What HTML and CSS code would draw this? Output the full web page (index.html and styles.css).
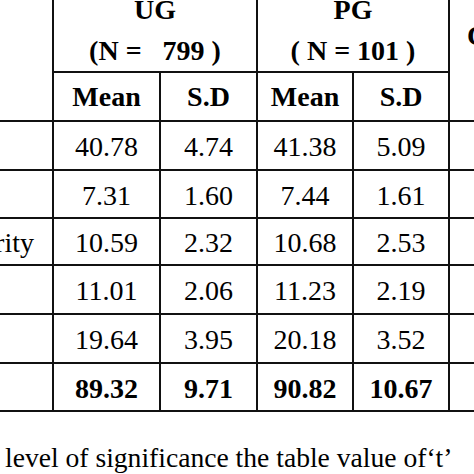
FILE: index.html
```html
<!DOCTYPE html>
<html lang="en">
<head>
  <meta charset="UTF-8">
  <title>UG / PG comparison</title>
  <meta name="viewport" content="width=device-width, initial-scale=1.0">
  <link rel="stylesheet" href="styles.css">
</head>
<body>
  <div class="sheet">
    <table class="stats">
      <colgroup>
        <col class="col-label">
        <col class="col-ug-mean">
        <col class="col-ug-sd">
        <col class="col-pg">
        <col class="col-pg">
        <col class="col-extra">
      </colgroup>
      <thead>
        <tr class="row-group">
          <th rowspan="2" class="label"></th>
          <th colspan="2" class="group">UG<br>(N = &nbsp;&nbsp;799 )</th>
          <th colspan="2" class="group">PG<br>( N = 101 )</th>
          <th rowspan="2" class="extra">Calculated ‘t’ value</th>
        </tr>
        <tr class="row-sub">
          <th>Mean</th>
          <th>S.D</th>
          <th>Mean</th>
          <th>S.D</th>
        </tr>
      </thead>
      <tbody>
        <tr>
          <td class="label"></td>
          <td>40.78</td><td>4.74</td><td>41.38</td><td>5.09</td><td></td>
        </tr>
        <tr>
          <td class="label"></td>
          <td>7.31</td><td>1.60</td><td>7.44</td><td>1.61</td><td></td>
        </tr>
        <tr>
          <td class="label">Maturity</td>
          <td>10.59</td><td>2.32</td><td>10.68</td><td>2.53</td><td></td>
        </tr>
        <tr>
          <td class="label"></td>
          <td>11.01</td><td>2.06</td><td>11.23</td><td>2.19</td><td></td>
        </tr>
        <tr>
          <td class="label"></td>
          <td>19.64</td><td>3.95</td><td>20.18</td><td>3.52</td><td></td>
        </tr>
        <tr class="total">
          <td class="label"></td>
          <td>89.32</td><td>9.71</td><td>90.82</td><td>10.67</td><td></td>
        </tr>
      </tbody>
    </table>

    <p class="note">level of significance the table value of‘t’</p>
  </div>
</body>
</html>
```

FILE: styles.css
```css
:root {
  --ink: #000;
  --line: #111;
  --paper: #fff;
}

html, body {
  margin: 0;
  background: var(--paper);
  overflow: hidden;
}

body {
  font-family: "Liberation Serif", "Times New Roman", serif;
  font-size: 28px;
  color: var(--ink);
}

.sheet {
  width: 474px;
  height: 474px;
  overflow: hidden;
}

/* table is wider than the crop: first column mostly hidden on the left */
.stats {
  border-collapse: collapse;
  table-layout: fixed;
  width: 796px;
  margin: -12px 0 0 -148px;
}

.col-label { width: 200px; }
.col-ug-mean { width: 107px; }
.col-ug-sd { width: 97px; }
.col-pg { width: 96px; }
.col-extra { width: 200px; }

.stats th,
.stats td {
  border: 2px solid var(--line);
  padding: 0;
  text-align: center;
  vertical-align: middle;
  line-height: 32px;
}

.stats td {
  padding-top: 3px;
}

.stats th {
  font-weight: bold;
}

.stats .group {
  line-height: 41px;
  border-top: none;
  vertical-align: top;
  padding-top: 1px;
}

.row-group { height: 84px; }
.row-sub { height: 49px; }

.stats th.label {
  border-top: none;
}

.stats td.label {
  text-align: right;
  padding-right: 18px;
  white-space: nowrap;
}

.stats .extra {
  border-top: none;
  text-align: left;
  vertical-align: top;
  padding: 27px 0 0 17px;
  line-height: 41px;
  white-space: nowrap;
}

tbody tr:nth-child(1) { height: 49px; }
tbody tr:nth-child(2) { height: 48px; }
tbody tr:nth-child(3) { height: 47px; }
tbody tr:nth-child(4) { height: 49px; }
tbody tr:nth-child(5) { height: 49px; }
tbody tr:nth-child(6) { height: 48px; }

.total td {
  font-weight: bold;
}

.note {
  margin: 30px 0 0;
  padding-left: 5px;
  font-size: 27.6px;
  line-height: 32px;
  white-space: nowrap;
}
```
